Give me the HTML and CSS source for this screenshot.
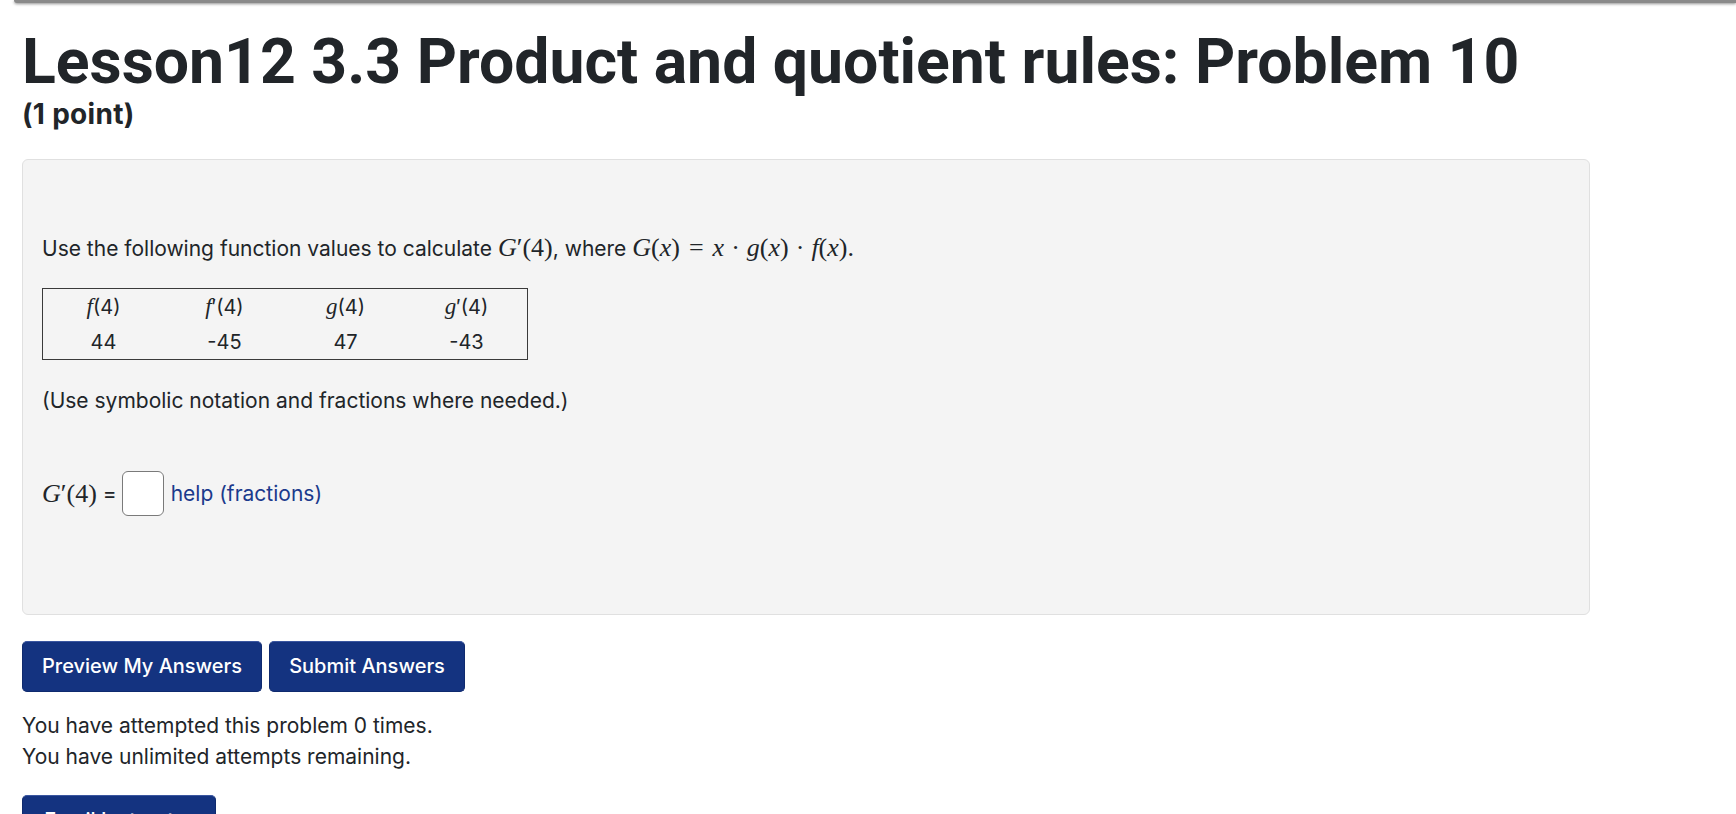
FILE: index.html
```html
<!DOCTYPE html>
<html lang="en">
<head>
    <meta charset="UTF-8">
    <meta name="viewport" content="width=device-width, initial-scale=1.0">
    <title>Lesson12 3.3 Product and quotient rules: Problem 10</title>
    <link rel="stylesheet" href="styles.css">
</head>
<body>

    <!-- bottom edge of the fixed nav bar -->
    <div class="topbar"></div>

    <div class="content">
        <h1 class="problem-title">Lesson12 3.3 Product and quotient rules: Problem 10</h1>
        <div class="points">(1 point)</div>

        <!-- Problem body -->
        <div class="problem-panel">
            <p class="line">Use the following function values to calculate <span class="math"><i>G</i>′(4)</span>, where <span class="math"><i>G</i>(<i>x</i>)<span class="rel">=</span><i>x</i><span class="op">·</span><i>g</i>(<i>x</i>)<span class="op">·</span><i>f</i>(<i>x</i>).</span></p>

            <table class="values">
                <tr>
                    <td><i class="mv">f</i>(4)</td>
                    <td><i class="mv">f</i>′(4)</td>
                    <td><i class="mv">g</i>(4)</td>
                    <td><i class="mv">g</i>′(4)</td>
                </tr>
                <tr>
                    <td>44</td>
                    <td>-45</td>
                    <td>47</td>
                    <td>-43</td>
                </tr>
            </table>

            <p class="line">(Use symbolic notation and fractions where needed.)</p>

            <div class="answer-row">
                <span class="math"><i>G</i>′(4)</span>
                <span class="eq">=</span>
                <input class="answer" type="text" aria-label="answer">
                <a class="help" href="#">help (fractions)</a>
            </div>
        </div>

        <div class="buttons">
            <button class="btn">Preview My Answers</button>
            <button class="btn">Submit Answers</button>
        </div>

        <div class="attempts">
            <p>You have attempted this problem 0 times.</p>
            <p>You have unlimited attempts remaining.</p>
        </div>

        <button class="btn btn-email">Email Instructor</button>
    </div>

</body>
</html>
```

FILE: styles.css
```css
body {
    margin: 0;
    padding: 0;
    font-family: Inter, "Liberation Sans", sans-serif;
    font-size: 21px;
    line-height: 1.5;
    color: #212529;
    background: #ffffff;
    overflow: hidden;
}

.topbar {
    height: 3px;
    margin-left: 14px;
    margin-bottom: 1px;
    background: #8a8a8a;
    border-bottom-left-radius: 6px;
    box-shadow: 0 1px 3px rgba(0, 0, 0, 0.45);
}

.content {
    width: 1568px;
    padding-left: 22px;
}

.problem-title {
    margin: 21px 0 0;
    font-family: Roboto, Inter, sans-serif;
    font-size: 62.5px;
    font-weight: 700;
    line-height: 1.2;
    white-space: nowrap;
}

.points {
    margin-top: -1px;
    font-size: 28px;
    font-weight: 700;
    line-height: 1.2;
    letter-spacing: 0.3px;
}

/* Problem body */
.problem-panel {
    margin-top: 27px;
    padding: 73px 19px 97px;
    background: #f4f4f4;
    border: 1px solid #e0e0e0;
    border-radius: 6px;
}

.line {
    margin: 0;
}

.math {
    font-family: "Liberation Serif", "DejaVu Serif", serif;
    font-size: 26px;
    line-height: 1;
}

.math .rel {
    padding: 0 9px;
}

.math .op {
    padding: 0 7px;
}

.mv {
    font-family: "Liberation Serif", "DejaVu Serif", serif;
    font-size: 23px;
}

.values {
    margin: 24px 0 25px;
    border-collapse: collapse;
    border: 1.5px solid #3a3a3a;
}

.values td {
    width: 121px;
    height: 35px;
    padding: 0;
    text-align: center;
    font-size: 20px;
    line-height: 1;
}

.answer-row {
    margin-top: 54px;
    display: flex;
    align-items: center;
    height: 46px;
}

.eq {
    margin: 0 5px 0 6px;
}

.answer {
    width: 42px;
    height: 45px;
    box-sizing: border-box;
    margin: 0;
    border: 1.5px solid #7a7a7a;
    border-radius: 6px;
    background: #ffffff;
}

.help {
    margin-left: 7px;
    color: #1b3a8c;
    text-decoration: none;
}

.buttons {
    margin-top: 26px;
    display: flex;
    gap: 7px;
}

.btn {
    height: 51px;
    padding: 0 19px;
    font-family: Inter, "Liberation Sans", sans-serif;
    font-size: 20px;
    font-weight: 500;
    color: #ffffff;
    background: #143380;
    border: 1px solid #0f2a6e;
    border-top-color: #3a56a0;
    border-radius: 5px;
    cursor: pointer;
}

.attempts {
    margin-top: 18px;
}

.attempts p {
    margin: 0;
    line-height: 31px;
}

.btn-email {
    margin-top: 23px;
    width: 194px;
}
```
